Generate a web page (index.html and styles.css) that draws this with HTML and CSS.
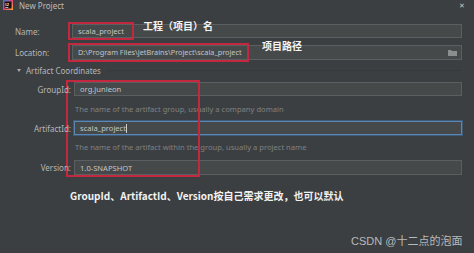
FILE: index.html
```html
<!DOCTYPE html>
<html>
<head>
<meta charset="utf-8">
<link rel="stylesheet" href="styles.css">
</head>
<body>
<div class="dialog">
  <div class="titlebar">
    <svg class="logo" width="10" height="10" viewBox="0 0 10 10">
      <defs>
        <linearGradient id="g" x1="0" y1="0" x2="1" y2="1">
          <stop offset="0" stop-color="#2f7bd6"/>
          <stop offset="0.5" stop-color="#e0467a"/>
          <stop offset="1" stop-color="#f7a93a"/>
        </linearGradient>
      </defs>
      <rect x="0" y="0" width="10" height="10" fill="url(#g)"/>
      <rect x="1.5" y="1.5" width="7" height="7" fill="#111"/>
      <text x="2.3" y="6.2" font-size="4" font-family="Liberation Sans" font-weight="bold" fill="#fff">IJ</text>
      <rect x="2.3" y="7" width="3" height="0.7" fill="#fff"/>
    </svg>
    <span class="title">New Project</span>
    <span class="close">✕</span>
  </div>

  <div class="form">
    <div class="row top">
      <span class="label">Name:</span>
      <div class="field">scala_project</div>
    </div>
    <div class="row top loc">
      <span class="label">Location:</span>
      <div class="field">
        <span class="val">D:\Program Files\JetBrains\Project\scala_project</span>
        <svg class="folder" width="9" height="7" viewBox="0 0 9 7">
          <path d="M0 1 L0 7 L9 7 L9 2 L4 2 L3 1 Z" fill="#8b8d8f"/>
        </svg>
      </div>
    </div>
    <div class="section">
      <span class="tri"></span>
      <span class="stitle">Artifact Coordinates</span>
      <span class="sep"></span>
    </div>
    <div class="row art gid">
      <span class="label">GroupId:</span>
      <div class="field">org.junleon</div>
    </div>
    <div class="hint h1">The name of the artifact group, usually a company domain</div>
    <div class="row art aid">
      <span class="label">ArtifactId:</span>
      <div class="field focus">scala_project<span class="caret"></span></div>
    </div>
    <div class="hint h2">The name of the artifact within the group, usually a project name</div>
    <div class="row art ver">
      <span class="label">Version:</span>
      <div class="field">1.0-SNAPSHOT</div>
    </div>
  </div>

  <div class="note">GroupId、ArtifactId、Version按自己需求更改，也可以默认</div>

  <div class="mark box1"></div>
  <div class="mark box2"></div>
  <div class="mark box3"></div>
  <div class="ann ann1">工程（项目）名</div>
  <div class="ann ann2">项目路径</div>
  <div class="watermark">CSDN @十二点的泡面</div>
</div>
</body>
</html>
```

FILE: styles.css
```css
* { box-sizing: border-box; }
html, body {
  margin: 0;
  padding: 0;
  background: #3c3f41;
}
.dialog {
  position: relative;
  width: 474px;
  height: 253px;
  background: #3c3f41;
  font-family: "Noto Sans", "Liberation Sans", sans-serif;
  font-size: 8px;
  color: #b4b6b8;
  overflow: hidden;
}
.titlebar {
  height: 11px;
  display: flex;
  align-items: center;
  padding-left: 3px;
  padding-right: 9px;
}
.logo { flex: none; margin-top: -2px; }
.title {
  margin-left: 6px;
  font-size: 8px;
  line-height: 10px;
  color: #b9bbbd;
}
.close {
  margin-left: auto;
  font-size: 7px;
  color: #c4c4c4;
}
.form {
  padding-left: 15px;
  padding-right: 12px;
}
.row {
  display: flex;
  align-items: center;
  height: 14px;
}
.row.top { margin-top: 13px; }
.row.top.loc { margin-top: 7px; }
.row.top .label {
  width: 57px;
  flex: none;
}
.field {
  flex: 1;
  height: 14px;
  display: flex;
  align-items: center;
  background: #45494a;
  border: 1px solid #5c5f61;
  padding-left: 5px;
  color: #c3c5c7;
  font-size: 7.6px;
  white-space: nowrap;
}
.loc .field { height: 15px; font-size: 7.3px; }
.val { flex: 1; }
.folder { margin-right: 4px; }
.section {
  display: flex;
  align-items: center;
  height: 10px;
  margin-top: 6px;
  padding-left: 2px;
}
.tri {
  width: 0;
  height: 0;
  border-left: 2.5px solid transparent;
  border-right: 2.5px solid transparent;
  border-top: 3px solid #a8aaac;
}
.stitle {
  margin-left: 5px;
  color: #b4b6b8;
}
.sep {
  flex: 1;
  height: 1px;
  margin-left: 6px;
  background: #37393b;
}
.row.art .label {
  position: relative;
  z-index: 2;
  width: 56px;
  flex: none;
  text-align: right;
}
.row.art .field { margin-left: 3px; }
.gid { margin-top: 7px; }
.aid { margin-top: 7px; }
.ver { margin-top: 8px; height: 15px; }
.ver .field { height: 15px; }
.field.focus {
  border-color: #5b87b5;
  box-shadow: 0 0 0 1px #3d5a78;
}
.caret {
  display: inline-block;
  width: 1px;
  height: 9px;
  background: #d0d0d0;
}
.hint {
  height: 10px;
  line-height: 10px;
  padding-left: 60px;
  color: #7f8183;
  font-size: 7.6px;
  white-space: nowrap;
}
.h1 { margin-top: 8px; }
.h2 { margin-top: 7px; }
.note {
  margin-top: 15px;
  padding-left: 70px;
  height: 12px;
  line-height: 12px;
  font-family: "Noto Sans CJK SC", "Noto Sans", sans-serif;
  font-weight: bold;
  font-size: 10px;
  color: #f2f2f2;
  white-space: nowrap;
}
.mark {
  position: absolute;
  z-index: 1;
  border: 2px solid #c4283f;
}
.box1 { left: 68px; top: 22px; width: 66px; height: 18px; }
.box2 { left: 68px; top: 43px; width: 181px; height: 19px; }
.box3 { left: 66px; top: 80px; width: 134px; height: 97px; }
.ann {
  position: absolute;
  font-family: "Noto Sans CJK SC", sans-serif;
  font-weight: bold;
  font-size: 10px;
  line-height: 12px;
  color: #f4f4f4;
  white-space: nowrap;
}
.ann1 { left: 143px; top: 20px; }
.ann2 { left: 262px; top: 40px; }
.watermark {
  position: absolute;
  left: 351px;
  top: 234px;
  font-family: "Liberation Sans", "Noto Sans CJK SC", sans-serif;
  font-size: 11px;
  line-height: 14px;
  color: #b8b9ba;
  white-space: nowrap;
}
```
